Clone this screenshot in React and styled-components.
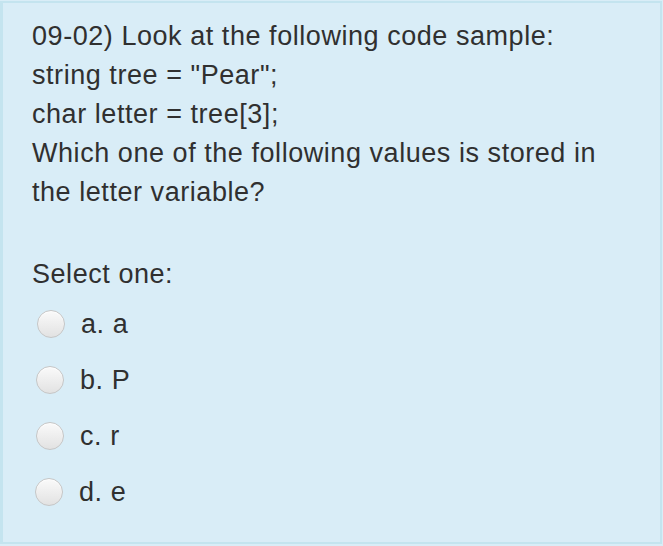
import React from "react";
import styled, { createGlobalStyle } from "styled-components";

const Global = createGlobalStyle`
  html, body { margin: 0; padding: 0; background: #d9edf7; }
  body { width: 663px; height: 546px; overflow: hidden; }
`;

const Panel = styled.div`
  box-sizing: border-box;
  width: 662px;
  height: 543px;
  margin-top: 1px;
  background: #d9edf7;
  border: 2px solid #c4e4ef;
  border-left-width: 3px;
  padding: 14px 0 0 29px;
  font-family: "Liberation Sans", Arial, sans-serif;
  color: #303030;
  font-size: 27px;
  letter-spacing: 0.55px;
`;

const Question = styled.div`
  line-height: 39px;
`;

const Line = styled.div``;

const Prompt = styled.div`
  margin-top: 42px;
  line-height: 40px;
`;

const Options = styled.div`
  display: flex;
  flex-direction: column;
  margin-top: 2px;
`;

const Option = styled.label`
  display: flex;
  align-items: center;
  height: 56px;
  padding-left: ${(p) => p.$indent}px;
`;

const Radio = styled.span`
  box-sizing: border-box;
  width: 28px;
  height: 28px;
  border-radius: 50%;
  border: 1px solid #c6c6c6;
  background: linear-gradient(#fafafa, #e2e2e2);
  box-shadow: inset 0 1px 1px rgba(255,255,255,0.9);
  margin-right: 16px;
  flex: none;
`;

const OptionText = styled.span`
  line-height: normal;
`;

export default function App() {
  const opts = [
    { t: "a. a", i: 5 },
    { t: "b. P", i: 4 },
    { t: "c. r", i: 4 },
    { t: "d. e", i: 3 },
  ];
  return (
    <>
      <Global />
      <Panel>
        <Question>
          <Line>09-02) Look at the following code sample:</Line>
          <Line>string tree = "Pear";</Line>
          <Line>char letter = tree[3];</Line>
          <Line>Which one of the following values is stored in</Line>
          <Line>the letter variable?</Line>
        </Question>
        <Prompt>Select one:</Prompt>
        <Options>
          {opts.map((o) => (
            <Option key={o.t} $indent={o.i}>
              <Radio />
              <OptionText>{o.t}</OptionText>
            </Option>
          ))}
        </Options>
      </Panel>
    </>
  );
}
